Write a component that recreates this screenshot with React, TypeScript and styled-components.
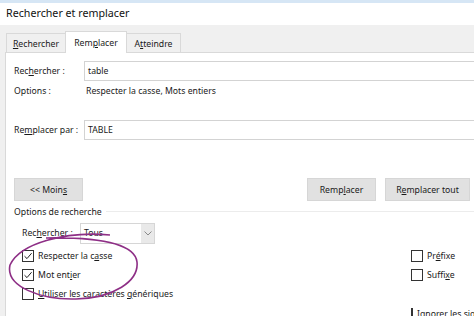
import styled, { createGlobalStyle } from "styled-components";

const Global = createGlobalStyle`
  html, body {
    margin: 0;
    padding: 0;
    overflow: hidden;
  }
  body {
    font-family: "Noto Sans", "Open Sans", sans-serif;
    font-size: 8.7px;
    color: #1a1a1a;
    white-space: nowrap;
  }
`;

function Check({ checked }: { checked?: boolean }) {
  return (
    <Box>
      {checked && (
        <svg width="10" height="10" viewBox="0 0 10 10">
          <path d="M1.5 5.2 L4 7.6 L8.6 2.2" fill="none" stroke="#222" strokeWidth="1" />
        </svg>
      )}
    </Box>
  );
}

export default function App() {
  return (
    <Window>
      <Global />
      <TitleBar>Rechercher et remplacer</TitleBar>
      <TabStrip>
        <Tab $w={60}>
          <u>R</u>echercher
        </Tab>
        <Tab $w={62} $active>
          Rem<u>p</u>lacer
        </Tab>
        <Tab $w={55}>
          A<u>t</u>teindre
        </Tab>
      </TabStrip>
      <Panel>
        <FieldRow>
          <Label>
            Rec<u>h</u>ercher :
          </Label>
          <Input>table</Input>
        </FieldRow>
        <InfoRow>
          <Label>Options :</Label>
          <Info>Respecter la casse, Mots entiers</Info>
        </InfoRow>
        <FieldRow $top={19}>
          <Label>
            Re<u>m</u>placer par :
          </Label>
          <Input>TABLE</Input>
        </FieldRow>
        <ButtonRow>
          <Button $w={69}>
            &lt;&lt; Moin<u>s</u>
          </Button>
          <Spacer />
          <Button $w={69}>
            Remp<u>l</u>acer
          </Button>
          <Button $w={85}>
            R<u>e</u>mplacer tout
          </Button>
        </ButtonRow>
        <GroupTitle>
          <span>Options de recherche</span>
          <GroupLine />
        </GroupTitle>
        <SelectRow>
          <SmallLabel>
            Rec<u>h</u>ercher :
          </SmallLabel>
          <Select>
            <span>Tous</span>
            <Arrow>
              <svg width="8" height="5" viewBox="0 0 8 5">
                <path d="M0.5 0.5 L4 4 L7.5 0.5" fill="none" stroke="#8a8a8a" strokeWidth="1" />
              </svg>
            </Arrow>
          </Select>
        </SelectRow>
        <Options>
          <Column>
            <CheckRow>
              <Check checked />
              <span>
                Respecter la c<u>a</u>sse
              </span>
            </CheckRow>
            <CheckRow>
              <Check checked />
              <span>
                Mot ent<u>i</u>er
              </span>
            </CheckRow>
            <CheckRow>
              <Check />
              <span>
                <u>U</u>tiliser les caractères <u>g</u>énériques
              </span>
            </CheckRow>
          </Column>
          <Column $right>
            <CheckRow>
              <Check />
              <span>
                Pr<u>é</u>fixe
              </span>
            </CheckRow>
            <CheckRow>
              <Check />
              <span>
                Suffi<u>x</u>e
              </span>
            </CheckRow>
            <CheckRow $gap={20}>
              <Check />
              <span>Ignorer les signes de ponctuation</span>
            </CheckRow>
          </Column>
        </Options>
        {/* hand-drawn highlight around the two ticked options */}
        <Circle width="140" height="74" viewBox="0 0 140 74">
          <path
            d="M104 4 C 60 0, 14 12, 4 34 C -1 56, 36 69, 70 68 C 108 67, 133 50, 131 31 C 129 14, 100 6, 40 7"
            fill="none"
            stroke="#8e2f86"
            strokeWidth="1.6"
          />
        </Circle>
      </Panel>
    </Window>
  );
}

const Window = styled.div`
  width: 474px;
  height: 316px;
  background: #f0f0f0;
  overflow: hidden;
`;

const TitleBar = styled.div`
  height: 20px;
  padding-bottom: 2px;
  border-top: 3px solid #d6e6f5;
  background: #ffffff;
  padding-left: 6px;
  display: flex;
  align-items: center;
  font-size: 10.7px;
  color: #111;
`;

const TabStrip = styled.div`
  display: flex;
  align-items: flex-end;
  height: 27px;
  padding-left: 6px;
`;

const Tab = styled.div<{ $active?: boolean; $w: number }>`
  width: ${(p) => p.$w}px;
  box-sizing: border-box;
  height: ${(p) => (p.$active ? 22 : 19)}px;
  display: flex;
  align-items: center;
  justify-content: center;
  background: ${(p) => (p.$active ? "#ffffff" : "#f0f0f0")};
  border: 1px solid #d9d9d9;
  border-bottom: none;
  margin-right: -1px;
  position: relative;
  z-index: ${(p) => (p.$active ? 1 : 0)};
  margin-bottom: ${(p) => (p.$active ? -1 : 0)}px;
  padding-top: ${(p) => (p.$active ? 0 : 1)}px;
`;

const Panel = styled.div`
  position: relative;
  margin-left: 5px;
  width: 560px;
  height: 300px;
  background: #ffffff;
  border-left: 1px solid #d9d9d9;
  border-top: 1px solid #d9d9d9;
  padding: 8px 0 0 8px;
  box-sizing: border-box;
`;

const FieldRow = styled.div<{ $top?: number }>`
  display: flex;
  align-items: center;
  height: 20px;
  margin-top: ${(p) => p.$top ?? 0}px;
`;

const Label = styled.div`
  width: 70px;
  flex: none;
`;

const Input = styled.div`
  flex: 1;
  height: 18px;
  border: 1px solid #d3d3d3;
  display: flex;
  align-items: center;
  padding-left: 3px;
`;

const InfoRow = styled.div`
  display: flex;
  align-items: center;
  height: 20px;
`;

const Info = styled.div`
  padding-left: 2px;
`;

const ButtonRow = styled.div`
  display: flex;
  width: 456px;
  gap: 9px;
  margin-top: 38px;
`;

const Spacer = styled.div`
  flex: 1;
`;

const Button = styled.div<{ $w: number }>`
  width: ${(p) => p.$w}px;
  height: 23px;
  box-sizing: border-box;
  background: #e1e1e1;
  border: 1px solid #d6d6d6;
  display: flex;
  align-items: center;
  justify-content: center;
`;

const GroupTitle = styled.div`
  display: flex;
  align-items: center;
  gap: 4px;
  height: 20px;
  margin-top: 1px;
  width: 462px;
`;

const GroupLine = styled.div`
  flex: 1;
  height: 1px;
  background: #ececec;
  margin-top: -2px;
`;

const SelectRow = styled.div`
  display: flex;
  align-items: center;
  height: 22px;
  padding-left: 8px;
`;

const SmallLabel = styled.div`
  width: 58px;
`;

const Select = styled.div`
  width: 75px;
  height: 21px;
  box-sizing: border-box;
  border: 1px solid #d6d6d6;
  display: flex;
  align-items: center;
  padding-left: 3px;
  justify-content: space-between;
`;

const Arrow = styled.div`
  width: 13px;
  height: 100%;
  background: #e9e9e9;
  display: flex;
  align-items: center;
  justify-content: center;
`;

const Options = styled.div`
  display: flex;
  width: 500px;
  margin-top: 2px;
  padding-left: 8px;
`;

const Column = styled.div<{ $right?: boolean }>`
  display: flex;
  flex-direction: column;
  margin-left: ${(p) => (p.$right ? "auto" : "0")};
  width: ${(p) => (p.$right ? "111px" : "auto")};
`;

const CheckRow = styled.div<{ $gap?: number }>`
  display: flex;
  align-items: center;
  gap: 4px;
  height: 19px;
  margin-top: ${(p) => p.$gap ?? 0}px;
`;

const Box = styled.div`
  width: 12px;
  height: 12px;
  border: 1px solid #333;
  box-sizing: border-box;
  display: flex;
  align-items: center;
  justify-content: center;
  background: #fff;
`;

const Circle = styled.svg`
  position: absolute;
  left: 0;
  top: 178px;
`;
